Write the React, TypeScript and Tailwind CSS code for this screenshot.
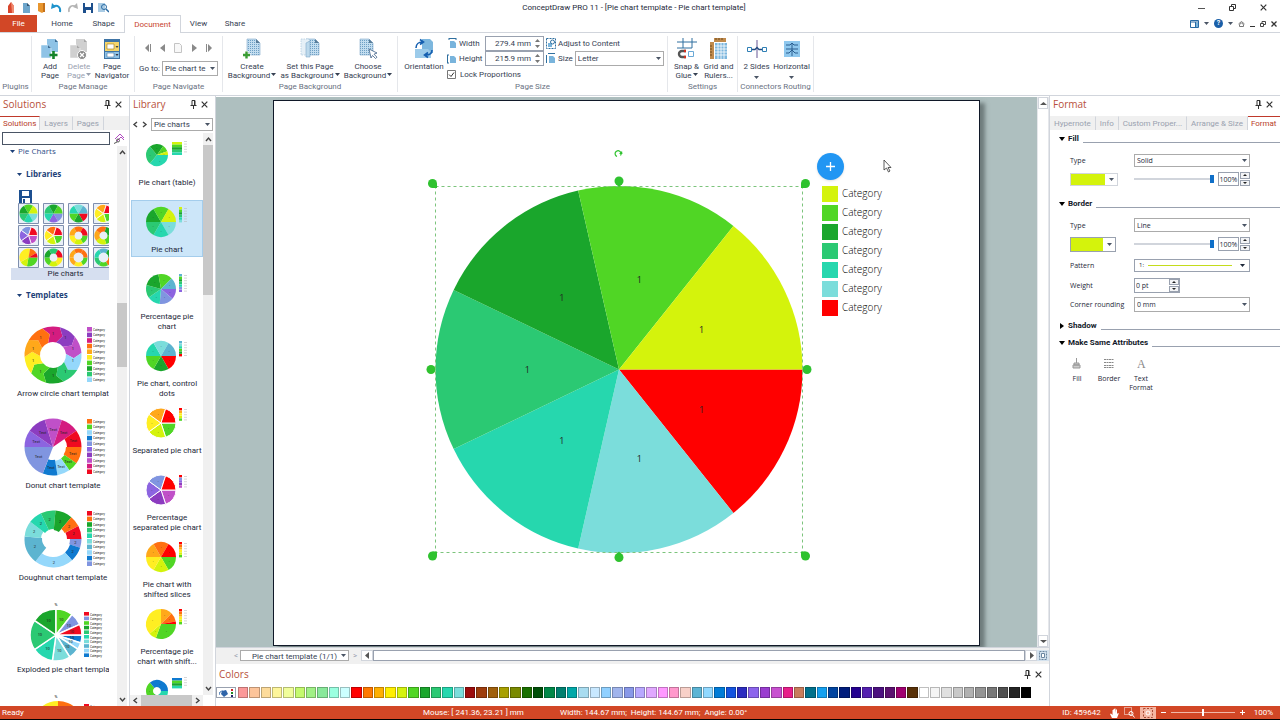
import React from 'react';

type Slice = [color: string, sweep: number, inner?: number];

const RED = '#ff0000';
const AQUA = '#7bdddb';
const TEAL = '#26d7ae';
const GREEN = '#2bc973';
const DARK = '#1aa62c';
const LIME = '#50d625';
const YELLOW = '#d4f30c';
const SUN = '#ffee22';
const AMBER = '#ffa81a';
const ORANGE = '#ff7010';
const BLUE = '#0f7ad0';
const SKY = '#95d8fb';
const STEEL = '#5cb4d0';
const PERI = '#8095e0';
const VIOLET = '#8c64e0';
const PURPLE = '#8c3cc0';
const ORCHID = '#c050c8';
const PINK = '#d41c80';
const CRIMSON = '#f00a20';

const at = (cx: number, cy: number, r: number, deg: number) => {
  const a = (deg * Math.PI) / 180;
  return `${(cx + r * Math.cos(a)).toFixed(2)} ${(cy + r * Math.sin(a)).toFixed(2)}`;
};

const even = (colors: string[], inner = 0): Slice[] =>
  colors.map((c) => [c, 360 / colors.length, inner]);

interface PieProps {
  cx: number;
  cy: number;
  r: number;
  slices: Slice[];
  start?: number;
  stroke?: string;
  gap?: number;
  label?: string;
  labelSize?: number;
}

const Pie = ({ cx, cy, r, slices, start = 0, stroke = 'none', gap = 0, label, labelSize = 4 }: PieProps) => {
  let angle = start;
  return (
    <g>
      {slices.map(([color, sweep, inner = 0], i) => {
        const a = angle;
        const b = angle + sweep;
        angle = b;
        const large = sweep > 180 ? 1 : 0;
        const d = `M${at(cx, cy, inner, a)} L${at(cx, cy, r, a)} A${r} ${r} 0 ${large} 1 ${at(cx, cy, r, b)} L${at(cx, cy, inner, b)} ${inner ? `A${inner} ${inner} 0 ${large} 0 ${at(cx, cy, inner, a)}` : ''} Z`;
        const [x, y] = at(cx, cy, inner ? (r + inner) / 2 : r * (labelSize > 6 ? 0.5 : 0.62), (a + b) / 2).split(' ');
        return (
          <g key={i}>
            <path d={d} fill={color} stroke={stroke} strokeWidth={gap} />
            {label && (
              <text x={x} y={Number(y) + labelSize * 0.36} fontSize={labelSize} textAnchor="middle" fill="#222">
                {label}
              </text>
            )}
          </g>
        );
      })}
    </g>
  );
};

const ArrowRing = ({ colors }: { colors: string[] }) => (
  <g>
    {colors.map((c, i) => {
      const step = 360 / colors.length;
      const a = -112 + i * step;
      const b = a + step;
      const p = (r: number, deg: number) => at(53, 47, r, deg);
      const [x, y] = p(21, a + step / 2 + 4).split(' ');
      return (
        <g key={c}>
          <path
            d={`M${p(13, a)} L${p(21, a + 13)} L${p(28.5, a)} A28.5 28.5 0 0 1 ${p(28.5, b)} L${p(21, b + 13)} L${p(13, b)} A13 13 0 0 0 ${p(13, a)} Z`}
            fill={c}
          />
          <text x={x} y={Number(y) + 1} fontSize="4" textAnchor="middle" fill="#222">1</text>
        </g>
      );
    })}
  </g>
);

const Legend = ({ x, y, pitch, colors }: { x: number; y: number; pitch: number; colors: string[] }) => (
  <g>
    {colors.map((c, i) => (
      <g key={i}>
        <rect x={x} y={y + i * pitch} width="5" height={pitch - 1} fill={c} />
        <text x={x + 6} y={y + i * pitch + 3.5} fontSize="3" fill="#222">Category</text>
      </g>
    ))}
  </g>
);

const Caret = ({ className = 'text-gray-600' }: { className?: string }) => (
  <svg width="5" height="3" viewBox="0 0 5 3" className={`inline-block shrink-0 ${className}`}>
    <path d="M0 0h5L2.5 3z" fill="currentColor" />
  </svg>
);

const Select = ({ label, value, className = '' }: { label: string; value: string; className?: string }) => (
  <div className={`relative ${className}`}>
    <select
      aria-label={label}
      defaultValue={value}
      className="block h-full w-full appearance-none border border-[#ababab] bg-white pl-[2px] pr-2 outline-none"
    >
      <option>{value}</option>
    </select>
    <span className="pointer-events-none absolute inset-y-0 right-[3px] flex items-center">
      <Caret />
    </span>
  </div>
);

const Spinner = () => (
  <span className="flex w-[10px] shrink-0 flex-col gap-px">
    {['M1 3h4L3 1z', 'M1 1h4L3 3z'].map((d, i) => (
      <button key={d} aria-label={i ? 'Decrease' : 'Increase'} className="flex flex-1 items-center justify-center border border-gray-400 bg-gray-100">
        <svg width="6" height="4"><path d={d} fill="#222" /></svg>
      </button>
    ))}
  </span>
);

const Pin = () => (
  <svg width="7" height="9" viewBox="0 0 7 9" fill="none" stroke="#333">
    <path d="M2 .5h3v5H2zM.5 5.5h6M3.5 5.5V9" />
    <path d="M4.5 1v4" />
  </svg>
);

const Close = () => (
  <svg width="7" height="7" viewBox="0 0 7 7" stroke="#333" strokeWidth="1.2">
    <path d="M.7.7l5.6 5.6M6.3.7L.7 6.3" />
  </svg>
);

const PanelTitle = ({ children }: { children: string }) => (
  <div className="flex h-4 shrink-0 items-center justify-between pl-[3px] pr-[7px]">
    <h2 className="font-['Open_Sans',sans-serif] text-[10px] leading-4 text-[#b8503a]">{children}</h2>
    <div className="flex items-center gap-1">
      <button aria-label={`Pin ${children}`}><Pin /></button>
      <button aria-label={`Close ${children}`}><Close /></button>
    </div>
  </div>
);

const PanelTabs = ({ tabs, active }: { tabs: string[]; active: string }) => (
  <div className="mt-1 flex h-[14px] shrink-0 overflow-hidden bg-[#f0f0f0]">
    {tabs.map((t) =>
      t === active ? (
        <button key={t} className="whitespace-nowrap border-r border-t border-r-gray-300 border-t-[#c0392b] bg-white px-[3px] text-[#b8402a]">{t}</button>
      ) : (
        <button key={t} className="whitespace-nowrap border-r border-t border-r-gray-300 border-t-transparent px-1 text-gray-400">{t}</button>
      )
    )}
  </div>
);

const Chevron = ({ dir }: { dir: 'up' | 'down' | 'left' | 'right' }) => {
  const d = { up: 'M1 5l2.5-3L6 5', down: 'M1 2l2.5 3L6 2', left: 'M5 1L2 3.5 5 6', right: 'M2 1l3 2.5L2 6' }[dir];
  return (
    <svg width="7" height="7" viewBox="0 0 7 7" fill="none" stroke="#444" strokeWidth="1.4"><path d={d} /></svg>
  );
};

/* ---------- ribbon ---------- */

const Sheets = ({ fill, fold, children }: { fill: string; fold: string; children?: React.ReactNode }) => (
  <svg width="20" height="22" viewBox="0 0 20 22">
    <path d="M7 1h8l3 3v10H7z" fill={fill} />
    <path d="M15 1l3 3h-3z" fill={fold} />
    <path d="M1 7h7l3 3v10H1z" fill={fill} stroke="#fff" strokeWidth=".5" />
    <path d="M8 7l3 3H8z" fill={fold} />
    {children}
  </svg>
);

const Hatched = ({ x = 5, children }: { x?: number; children?: React.ReactNode }) => (
  <svg width="20" height="22" viewBox="0 0 20 22">
    <defs>
      <pattern id="hatch" width="2" height="2" patternUnits="userSpaceOnUse">
        <rect width="2" height="2" fill="#c3ddef" />
        <rect width="1" height="1" fill="#6d9fc4" />
      </pattern>
    </defs>
    <path d={`M${x} 1h9l4 4v12H${x}z`} fill="url(#hatch)" stroke="#7fa9c9" strokeWidth=".6" />
    <path d={`M${x + 9} 1l4 4h-4z`} fill="#5a7d99" />
    {children}
  </svg>
);

const DeleteIcon = () => (
  <Sheets fill="#d0d0d0" fold="#a8a8a8">
    <circle cx="13" cy="17" r="4.5" fill="#8a8a8a" stroke="#fff" />
    <path d="M11 15l4 4m0-4l-4 4" stroke="#fff" strokeWidth="1.3" />
  </Sheets>
);

const AddIcon = () => (
  <Sheets fill="#8fc3e6" fold="#3f6f96">
    <path d="M13.500 13v8M9.500 17h8" stroke="#15832b" strokeWidth="2.6" />
  </Sheets>
);

const NavigatorIcon = () => (
  <svg width="20" height="22" viewBox="0 0 20 22">
    <path d="M2 1h16v20H2z" fill="#3f74a5" />
    <path d="M3 4h14v9H3z" fill="#f6d56a" />
    <path d="M5 6h7v5H5z" fill="#fff" stroke="#9a7a20" strokeWidth=".6" />
    <path d="M13.500 8h3l-1.500 2z" fill="#444" />
    <path d="M3 14h14v6H3z" fill="#8fc3e6" />
    <path d="M5 15h7v4H5z" fill="#fff" stroke="#3f74a5" strokeWidth=".6" />
    <path d="M13.500 16h3l-1.500 2z" fill="#334" />
  </svg>
);

const CreateIcon = () => (
  <Hatched>
    <path d="M4.500 13v8M.5 17h8" stroke="#fff" strokeWidth="4" />
    <path d="M4.500 13.500v7M1 17h7" stroke="#3a9c34" strokeWidth="2.4" />
  </Hatched>
);

const SetIcon = () => (
  <Hatched x={6}>
    <path d="M1 1h8v16H1z" fill="#e6f0f7" stroke="#9fc0d8" strokeWidth=".6" strokeDasharray="1.500 1" />
    <path d="M6 5l4-2v16H6z" fill="#bcd9ec" stroke="#7fa9c9" strokeWidth=".6" />
  </Hatched>
);

const ChooseIcon = () => (
  <Hatched x={2}>
    <path d="M11 11l8 4-3 1.200 3 3-1.500 1.300-3-3-1.500 2.500z" fill="#fff" stroke="#3f5f86" strokeWidth=".8" />
  </Hatched>
);

const OrientIcon = () => (
  <svg width="20" height="22" viewBox="0 0 20 22">
    <path d="M8 1h8l3 3v11H8z" fill="#7db7de" />
    <path d="M1 11h13l3 3v6H1z" fill="#9ccbea" />
    <path d="M2 10c0-4 3-6 6-6M6 1.500L9.500 4 6 6.500" fill="none" stroke="#155fb0" strokeWidth="1.600" />
    <path d="M18 12c0 4-3 5-6 5M14 14.500L10.500 17l3.500 2.500" fill="none" stroke="#155fb0" strokeWidth="1.600" />
  </svg>
);

const SnapIcon = () => (
  <svg width="20" height="22" viewBox="0 0 20 22" fill="none">
    <path d="M0 4h20M6 0v10M15 0v10M0 10h15" stroke="#2f6f9f" />
    <path d="M9 13H5a3 3 0 000 6h4" stroke="#555" strokeWidth="2.400" />
    <path d="M9 13H7M9 19H7" stroke="#d03020" strokeWidth="2.400" />
    <path d="M11.500 13.500h5v5h-5z" stroke="#6aa9d6" />
  </svg>
);

const GridIcon = () => (
  <svg width="20" height="22" viewBox="0 0 20 22">
    <path d="M5 0h12v4H5zM1 4h4v17H1z" fill="#c08a4c" />
    <path d="M7 0v2m3-2v2m3-2v2M1 8h2m-2 3h2m-2 3h2m-2 3h2" stroke="#6f4a1e" />
    <path d="M6 5h12v16H6z" fill="#7db7de" />
    <path d="M9 5v16m3-16v16m3-16v16M6 8h12M6 11h12M6 14h12M6 17h12" stroke="#fff" strokeWidth=".8" />
  </svg>
);

const SidesIcon = () => (
  <svg width="20" height="22" viewBox="0 0 20 22" fill="none">
    <path d="M10 2v18" stroke="#9a8fb8" strokeWidth="1.500" />
    <path d="M.5 9.500h4v4h-4zM15.500 9.500h4v4h-4z" stroke="#2f7fb5" />
    <path d="M5 11.500h3l2-2 2 2h3" stroke="#234a80" strokeWidth="1.300" />
  </svg>
);

const HorizIcon = () => (
  <svg width="20" height="22" viewBox="0 0 20 22" fill="none">
    <path d="M2 3h16v16H2z" fill="#8fc8ee" />
    <path d="M4 7h4l2-2 2 2h4M4 11h12M4 15h3l3-3 3 3h3M10 5v13" stroke="#2a5f90" />
  </svg>
);

interface ToolProps {
  icon: React.ReactNode;
  lines: string[];
  className: string;
  menu?: boolean;
  disabled?: boolean;
}

const Tool = ({ icon, lines, className, menu, disabled }: ToolProps) => (
  <button
    disabled={disabled}
    className={`flex flex-col items-center gap-[2px] whitespace-nowrap pt-[2px] leading-[9px] disabled:text-gray-400 ${className}`}
  >
    {icon}
    <span>
      {lines.map((l, i) => (
        <span key={l} className="block">
          {l}
          {menu && i === lines.length - 1 && <Caret className="mb-[2px] ml-px" />}
        </span>
      ))}
    </span>
  </button>
);

const Group = ({ name, className, children }: { name: string; className: string; children?: React.ReactNode }) => (
  <section className={`my-[3px] flex shrink-0 flex-col border-r border-gray-200 ${className}`}>
    <div className="flex min-h-0 flex-1 justify-center">{children}</div>
    <h3 className="whitespace-nowrap text-center leading-[10px] text-gray-500">{name}</h3>
  </section>
);

const SizeIcon = ({ d }: { d: string }) => (
  <svg width="10" height="11" viewBox="0 0 10 11" className="shrink-0">
    <path d="M3 3h4l2 2v5H3z" fill="#79b4dc" />
    <path d={d} stroke="#2f6f9f" fill="none" />
  </svg>
);

const Measure = ({ name, value, d }: { name: string; value: string; d: string }) => (
  <label className="flex h-[15px] items-center gap-[2px]">
    <SizeIcon d={d} />
    <span className="w-6">{name}</span>
    <span className="flex h-[15px] w-[59px] items-center border border-gray-400 pr-[3px]">
      <input defaultValue={value} className="w-full min-w-0 flex-1 text-right outline-none" />
      <svg width="5" height="9" viewBox="0 0 5 9" className="ml-1 shrink-0" fill="#777">
        <path d="M0 3h5L2.500 0zM0 6h5L2.500 9z" />
      </svg>
    </span>
  </label>
);

const navIcons = [
  { name: 'First page', d: 'M6 1v8L2 5zM7 1h1v8H7z' },
  { name: 'Previous page', d: 'M7 1v8L2 5z' },
  { name: 'Page', d: '' },
  { name: 'Next page', d: 'M3 1v8l5-4z' },
  { name: 'Last page', d: 'M2 1h1v8H2zM4 1v8l4-4z' },
];

const Ribbon = () => (
  <div className="flex h-[63px] shrink-0 overflow-hidden border-b border-gray-300">
    <Group name="Plugins" className="w-8" />
    <Group name="Page Manage" className="w-[103px]">
      <Tool icon={<AddIcon />} lines={['Add', 'Page']} className="w-7" />
      <Tool icon={<DeleteIcon />} lines={['Delete', 'Page']} className="w-[30px]" menu disabled />
      <Tool icon={<NavigatorIcon />} lines={['Page', 'Navigator']} className="w-9" />
    </Group>
    <Group name="Page Navigate" className="w-[88px]">
      <div className="flex flex-col gap-2 pt-[7px]">
        <div className="flex items-center justify-between px-1">
          {navIcons.map(({ name, d }) => (
            <button key={name} aria-label={name}>
              <svg width="10" height="10" viewBox="0 0 10 10">
                {d ? <path d={d} fill="#8a8a8a" /> : <path d="M1.500.5h5l2 2v7h-7z" fill="#f8f8f8" stroke="#c4c4c4" />}
              </svg>
            </button>
          ))}
        </div>
        <label className="flex h-[15px] items-center gap-[2px] whitespace-nowrap">
          Go to:
          <Select label="Go to" value="Pie chart te" className="h-[15px] w-[56px]" />
        </label>
      </div>
    </Group>
    <Group name="Page Background" className="w-[175px]">
      <Tool icon={<CreateIcon />} lines={['Create', 'Background']} className="w-[54px]" menu />
      <Tool icon={<SetIcon />} lines={['Set this Page', 'as Background']} className="w-[62px]" menu />
      <Tool icon={<ChooseIcon />} lines={['Choose', 'Background']} className="w-[54px]" menu />
    </Group>
    <Group name="Page Size" className="w-[270px]">
      <Tool icon={<OrientIcon />} lines={['Orientation']} className="w-[46px]" />
      <div className="flex w-[99px] flex-col">
        <Measure name="Width" value="279.4 mm" d="M2 .5h7M2 0v2M9 0v2" />
        <Measure name="Height" value="215.9 mm" d="M.5 2v8M0 2h2M0 10h2" />
        <label className="flex h-4 items-center gap-1">
          <input type="checkbox" defaultChecked className="peer sr-only" />
          <svg width="9" height="9" viewBox="0 0 9 9" fill="#fff" stroke="#777">
            <path d="M.5.5h8v8h-8z" />
            <path d="M2 4.500l2 2 3-4" stroke="#333" fill="none" />
          </svg>
          Lock Proportions
        </label>
      </div>
      <div className="flex w-[118px] flex-col">
        <button className="flex h-[15px] items-center gap-[2px]">
          <svg width="10" height="11" viewBox="0 0 10 11" fill="none">
            <path d="M.5 .5h9v10h-9z" stroke="#2f6f9f" strokeDasharray="2 1" />
            <path d="M2 5h4v4H2z" fill="#79b4dc" />
            <circle cx="6.500" cy="4" r="2" stroke="#2f6f9f" />
          </svg>
          Adjust to Content
        </button>
        <label className="flex h-[15px] items-center gap-[2px]">
          <SizeIcon d="M.5 2v8M2 .5h7" />
          Size
          <Select label="Size" value="Letter" className="h-[15px] flex-1" />
        </label>
      </div>
    </Group>
    <Group name="Settings" className="w-[70px]">
      <Tool icon={<SnapIcon />} lines={['Snap &', 'Glue']} className="w-8" menu />
      <Tool icon={<GridIcon />} lines={['Grid and', 'Rulers...']} className="w-8" />
    </Group>
    <Group name="Connectors Routing" className="w-[76px]">
      {[
        { n: '2 Sides', i: <SidesIcon />, w: 'w-[32px]' },
        { n: 'Horizontal', i: <HorizIcon />, w: 'w-[38px]' },
      ].map(({ n, i, w }) => (
        <button key={n} className={`flex flex-col items-center gap-[2px] pt-[2px] leading-[9px] ${w}`}>
          {i}
          {n}
          <Caret className="mt-[3px] text-gray-600" />
        </button>
      ))}
    </Group>
  </div>
);

const TitleBar = () => (
  <header className="grid h-[15px] shrink-0 grid-cols-[1fr_auto_1fr] items-center">
    <div className="flex items-center gap-[5px] pl-[6px]">
      <svg width="10" height="11" viewBox="0 0 10 11"><path d="M2 4l3-4 3 4v7H2z" fill="#d8452c" /><path d="M5 0l3 4v7H6z" fill="#f08a70" /></svg>
      <svg width="10" height="11" viewBox="0 0 10 11"><path d="M2 1h4l3 3v7H2z" fill="#6ea6cc" /><path d="M6 1l3 3H6z" fill="#33536e" /></svg>
      <svg width="10" height="11" viewBox="0 0 10 11"><path d="M2 1h7v8l-3 2-4-2z" fill="#e8962e" /><path d="M7 1h2v9H7z" fill="#c4701a" /></svg>
      <svg width="11" height="10" viewBox="0 0 11 10" fill="none"><path d="M2 4c4-3 8 0 7 5" stroke="#1f93cc" strokeWidth="2" /><path d="M0 6l1-6 4 4z" fill="#1f93cc" /></svg>
      <svg width="11" height="10" viewBox="0 0 11 10" fill="none"><path d="M9 4C5 1 1 4 2 9" stroke="#b4b4b4" strokeWidth="1.600" /><path d="M11 6l-1-6-4 4z" fill="#b4b4b4" /></svg>
      <svg width="10" height="10" viewBox="0 0 10 10"><path d="M0 0h10v10H0z" fill="#1d4f8c" /><path d="M2 0h6v4H2zM3 7h5v3H3z" fill="#fff" /></svg>
      <svg width="11" height="11" viewBox="0 0 11 11" fill="none"><path d="M0 1h7v9H0z" fill="#a9cbe4" /><circle cx="6" cy="5" r="2.500" stroke="#2a6ba4" /><path d="M8 7l3 3" stroke="#2a6ba4" strokeWidth="1.500" /></svg>
    </div>
    <h1 className="whitespace-nowrap pr-3 text-gray-800">ConceptDraw PRO 11 - [Pie chart template - Pie chart template]</h1>
    <div className="flex items-center justify-end gap-6 pr-[13px]">
      <button aria-label="Minimize"><svg width="7" height="7" stroke="#555"><path d="M0 4.500h7" /></svg></button>
      <button aria-label="Restore"><svg width="7" height="7" fill="none" stroke="#333"><path d="M.5 2.500h4v4h-4zM2.500 2V.5h4v4H5" /></svg></button>
      <button aria-label="Close window"><Close /></button>
    </div>
  </header>
);

const MenuBar = () => (
  <nav className="flex h-[18px] shrink-0 items-stretch border-b border-gray-300">
    <button className="w-[37px] bg-[#d24726] text-white">File</button>
    <button className="w-[50px]">Home</button>
    <button className="w-[37px] pr-1">Shape</button>
    <button className="h-[18px] w-[57px] border-x border-t border-gray-300 bg-white text-[#c8452c]">Document</button>
    <button className="w-[35px]">View</button>
    <button className="w-[38px]">Share</button>
    <div className="ml-auto flex items-center gap-[5px] pr-[3px]">
      <svg width="9" height="8" viewBox="0 0 9 8" fill="none" stroke="#2a6ba4"><path d="M.5.5h8v7h-8zM.5 2h8M5.500 2v5.500" /><path d="M6 3h2v4H6z" fill="#79b4dc" stroke="none" /></svg>
      <Caret />
      <button aria-label="Help" className="flex size-[9px] items-center justify-center rounded-full bg-[#1a5fa8] text-[7px] font-bold leading-none text-white">?</button>
      <Caret />
      <svg width="7" height="6" fill="none" stroke="#777"><path d="M.5 3L3.500.5l3 2.500M1.500 5.500v-2l2-1.500 2 1.500v2z" /></svg>
      <svg width="5" height="7" stroke="#333"><path d="M0 6.500h5" /></svg>
      <svg width="6" height="7" fill="none" stroke="#444"><path d="M.5 3.500h3v3h-3zM2 3V1.500h3.500v3H4" /></svg>
      <svg width="6" height="6" stroke="#333" strokeWidth="1.300"><path d="M.5.5l5 5m0-5l-5 5" /></svg>
    </div>
  </nav>
);

/* ---------- solutions panel ---------- */

const tiles: { slices: Slice[]; gap?: boolean }[] = [
  { slices: even([AQUA, TEAL, GREEN, DARK, LIME, YELLOW]) },
  { slices: even([PERI, VIOLET, TEAL, GREEN, DARK, LIME]) },
  { slices: even([CRIMSON, DARK, LIME, TEAL, AQUA, STEEL]) },
  { slices: even([LIME, YELLOW, SUN, AMBER, CRIMSON]), gap: true },
  { slices: even([ORCHID, PURPLE, VIOLET, PERI, CRIMSON]), gap: true },
  { slices: even([LIME, YELLOW, SUN, ORANGE, CRIMSON]), gap: true },
  { slices: even([LIME, YELLOW, SUN, AMBER, ORANGE, CRIMSON], 4) },
  { slices: even([LIME, YELLOW, AMBER, ORANGE, DARK], 4) },
  { slices: [[LIME, 100], [YELLOW, 50], [SUN, 130], [ORANGE, 50], [CRIMSON, 30]] },
  { slices: even([SUN, YELLOW, LIME, DARK, GREEN, CRIMSON], 4) },
  { slices: even([LIME, SUN, AMBER, AMBER, ORANGE, ORANGE], 5) },
  { slices: even([ORANGE, LIME, GREEN, TEAL, STEEL, DARK], 5) },
];

const templates = [
  {
    name: 'Arrow circle chart templat',
    art: <ArrowRing colors={[PINK, PURPLE, ORCHID, SKY, GREEN, DARK, LIME, SUN, AMBER, ORANGE]} />,
    legend: [ORCHID, PURPLE, PINK, ORANGE, AMBER, SUN, LIME, DARK, GREEN, SKY],
  },
  {
    name: 'Donut chart template',
    art: (
      <Pie
        cx={53} cy={47} r={28.5} label="Text" labelSize={4}
        slices={[[ORANGE, 35, 13], [LIME, 20, 14], [SKY, 26, 14], [BLUE, 30, 13], [PERI, 69], [VIOLET, 35], [PURPLE, 38], [ORCHID, 35], [PINK, 37], [CRIMSON, 35, 14]]}
      />
    ),
    legend: [ORANGE, LIME, SKY, BLUE, PERI, VIOLET, PURPLE, ORCHID, PINK, CRIMSON],
  },
  {
    name: 'Doughnut chart template',
    art: (
      <Pie
        cx={53} cy={47} r={28.5} label="2" labelSize={4}
        slices={[[PERI, 18, 17], [BLUE, 30, 18], [SKY, 80, 18], [STEEL, 57, 11], [AQUA, 32, 12], [TEAL, 28, 10], [GREEN, 30, 10], [DARK, 35, 9], [ORANGE, 23, 13], [CRIMSON, 27, 14]]}
      />
    ),
    legend: [CRIMSON, ORANGE, DARK, GREEN, TEAL, AQUA, STEEL, SKY, BLUE, PERI],
  },
  {
    name: 'Exploded pie chart templat',
    small: true,
    art: (
      <Pie
        cx={56} cy={51} r={26} label="10" labelSize={4} stroke="#fff" gap={1.5}
        slices={[[BLUE, 18], [SKY, 15], [STEEL, 25], [AQUA, 40], [TEAL, 48], [GREEN, 68], [DARK, 56], [LIME, 38], [PERI, 28], [CRIMSON, 24]]}
      />
    ),
    legend: [CRIMSON, PERI, LIME, DARK, GREEN, TEAL, AQUA, STEEL, SKY, BLUE],
  },
  {
    name: '',
    small: true,
    art: <Pie cx={58} cy={51} r={26} slices={[[BLUE, 100], [LIME, 130], [SUN, 40], [ORANGE, 90]]} />,
    legend: [CRIMSON, PERI],
  },
];

const Heading = ({ children }: { children: string }) => (
  <h3 className="flex items-center gap-[4px] pl-[17px] font-['Open_Sans',sans-serif] font-bold leading-[10px] text-[#1c3f78]">
    <Caret className="text-[#1c3f78]" />
    {children}
  </h3>
);

const Solutions = () => (
  <aside className="flex w-[130px] shrink-0 flex-col border-r border-gray-300">
    <PanelTitle>Solutions</PanelTitle>
    <PanelTabs tabs={['Solutions', 'Layers', 'Pages']} active="Solutions" />
    <div className="mt-px flex h-[15px] shrink-0 items-center gap-1 pl-[2px]">
      <input aria-label="Search solutions" className="h-[13px] w-[108px] border border-gray-600" />
      <svg width="11" height="11" viewBox="0 0 11 11" fill="none" stroke="#b04cc0">
        <path d="M1 6l5-5 4 4M3 8l4-4 3 3" />
        <circle cx="4" cy="7.500" r="1.500" stroke="#555" />
        <path d="M0 10.500L3 9" stroke="#555" />
      </svg>
    </div>
    <div className="flex min-h-0 flex-1">
      <div className="flex w-[109px] flex-col overflow-hidden">
        <h3 className="flex items-center gap-[3px] pl-[10px] font-['Open_Sans',sans-serif] leading-[10px] text-[#2f4f88]">
          <Caret className="text-[#1c3f78]" />
          Pie Charts
        </h3>
        <div className="mt-[13px]"><Heading>Libraries</Heading></div>
        <svg width="13" height="13" viewBox="0 0 13 13" className="ml-[19px] mt-[11px] shrink-0">
          <path d="M0 0h13v13H0z" fill="#1c4f90" />
          <path d="M3 1h7v5H3zM3 8h8v5H3z" fill="#fff" />
          <path d="M4 9h2v4H4z" fill="#1c4f90" />
        </svg>
        <div className="grid shrink-0 grid-cols-[repeat(4,21px)] gap-x-1 gap-y-px pl-[18px]">
          {tiles.map(({ slices, gap }, i) => (
            <svg key={i} width="21" height="21" viewBox="0 0 21 21">
              <path d="M.5.500h20v20H.5z" fill="#e9eff8" stroke="#7f8fae" />
              <Pie cx={10.5} cy={10.5} r={9} slices={slices} stroke={gap ? '#fff' : 'none'} gap={gap ? 0.8 : 0} />
            </svg>
          ))}
        </div>
        <div className="ml-[11px] h-3 shrink-0 bg-[#d6dff0] pl-[11px] text-center leading-3 text-gray-800">Pie charts</div>
        <div className="mt-[10px]"><Heading>Templates</Heading></div>
        <ul className="mt-2">
          {templates.map(({ name, art, legend, small }) => (
            <li key={name} className="h-[92px]">
              <svg width="109" height="80" viewBox="0 0 109 80" className="block">
                {small && <text x="56" y="22" fontSize="4" textAnchor="middle" fill="#222">%</text>}
                {art}
                {small ? <Legend x={84} y={28} pitch={4.6} colors={legend} /> : <Legend x={87} y={19} pitch={5.6} colors={legend} />}
              </svg>
              <div className="whitespace-nowrap pl-[17px] text-center leading-3 text-gray-800">{name}</div>
            </li>
          ))}
        </ul>
      </div>
      <div className="ml-2 flex w-[10px] flex-col items-center bg-[#f0f0f0] py-[3px]">
        <Chevron dir="up" />
        <div className="mt-[147px] h-16 w-full bg-[#c8c8c8]" />
        <div className="mt-auto"><Chevron dir="down" /></div>
      </div>
    </div>
  </aside>
);

/* ---------- library panel ---------- */

interface Shape {
  name: string;
  slices: Slice[];
  gap?: boolean;
  table?: boolean;
}

const shapes: Shape[] = [
  { name: 'Pie chart (table)', table: true, slices: [[TEAL, 130], [GREEN, 100], [DARK, 75], [LIME, 35], [YELLOW, 20]] },
  { name: 'Pie chart', slices: even([AQUA, TEAL, GREEN, DARK, LIME, YELLOW]) },
  { name: 'Percentage pie chart', slices: [[VIOLET, 40], [PERI, 55], [TEAL, 50], [GREEN, 50], [DARK, 65], [LIME, 55], [STEEL, 45]] },
  { name: 'Pie chart, control dots', slices: even([RED, DARK, LIME, TEAL, AQUA, STEEL]) },
  { name: 'Separated pie chart', gap: true, slices: even([LIME, YELLOW, SUN, AMBER, RED]) },
  { name: 'Percentage separated pie chart', gap: true, slices: even([ORCHID, PURPLE, VIOLET, PERI, RED]) },
  { name: 'Pie chart with shifted slices', slices: even([LIME, YELLOW, SUN, AMBER, ORANGE, RED]) },
  { name: 'Percentage pie chart with shift...', slices: [[LIME, 110], [YELLOW, 30], [SUN, 130], [AMBER, 45], [ORANGE, 35], [RED, 10]] },
  { name: '', table: true, slices: [[TEAL, 70, 4], [DARK, 60, 4], [LIME, 100, 4], [BLUE, 130, 4]] },
];

const Library = () => (
  <aside className="flex w-[86px] shrink-0 flex-col border-r border-gray-300">
    <PanelTitle>Library</PanelTitle>
    <div className="mt-[5px] flex h-[14px] shrink-0 items-center gap-[2px] px-[2px]">
      <button aria-label="Previous library"><Chevron dir="left" /></button>
      <button aria-label="Next library"><Chevron dir="right" /></button>
      <Select label="Library" value="Pie charts" className="ml-px h-[13px] flex-1" />
    </div>
    <div className="flex min-h-0 flex-1 pt-[2px]">
      <ul className="ml-px min-w-0 flex-1 overflow-hidden text-center leading-[10px] text-gray-800">
        {shapes.map(({ name, slices, gap, table }) => {
          const colors = slices.map(([c]) => c).reverse();
          const selected = name === 'Pie chart';
          return (
            <li key={name} className="h-[67px]">
              <button
                aria-label={name || 'Donut chart'}
                className={`flex w-full flex-col items-center ${selected ? 'h-[57px] bg-[#cce6f9] outline -outline-offset-1 outline-[#a4cdec]' : 'h-[66px]'}`}
              >
                <svg width="70" height="45" viewBox="0 0 70 45" className="block shrink-0">
                  <Pie
                    cx={table ? 25 : 29} cy={22} r={table ? 11 : 15} slices={slices}
                    label="1" labelSize={2} stroke={gap ? '#fff' : 'none'} gap={gap ? 1 : 0}
                  />
                  {colors.map((c, i) =>
                    table ? (
                      <rect key={i} x="40" y={9 + i * 2.6} width="10" height="2.600" fill={c} />
                    ) : (
                      <rect key={i} x="47" y={7 + i * 2.6} width="3" height="2.400" fill={c} />
                    )
                  )}
                  {colors.map((_, i) => (
                    <path key={i} d={`M52 ${8.5 + i * 2.6}h3`} stroke="#bbb" strokeWidth=".6" />
                  ))}
                </svg>
                {name}
              </button>
            </li>
          );
        })}
      </ul>
      <div className="mr-[2px] flex w-[10px] flex-col items-center bg-[#f0f0f0] py-[3px]">
        <Chevron dir="up" />
        <div className="mt-[2px] h-[150px] w-full bg-[#c8c8c8]" />
        <div className="mt-auto"><Chevron dir="down" /></div>
      </div>
    </div>
    <div className="mr-3 flex h-[11px] shrink-0 items-center bg-[#f0f0f0] px-[2px]">
      <Chevron dir="left" />
      <div className="mx-[2px] h-full flex-1 bg-[#c8c8c8]" />
      <Chevron dir="right" />
    </div>
  </aside>
);

/* ---------- drawing area ---------- */

const chartColors = [YELLOW, LIME, DARK, GREEN, TEAL, AQUA, RED];

// [x, y, corner that points at the selection frame]
const handles: [number, number, string][] = [
  [158.5, 82.5, 'M0 0h4.500v4.500H0z'],
  [345, 80, 'M-3 3h6L0 6z'],
  [531.5, 82.5, 'M0 0v4.500h-4.500V0z'],
  [157, 268.5, ''],
  [533, 268.5, ''],
  [158.5, 455, 'M0 0v-4.500h4.500V0z'],
  [345, 456.5, 'M-3-3h6L0-6z'],
  [531.5, 455, 'M0 0v-4.500h-4.500V0z'],
];

const Page = () => (
  <div className="relative mx-[57px] mb-px mt-[3px] flex-1 border border-gray-900 bg-white shadow-[5px_3px_4px_#6f7c7c]">
    <svg width="100%" height="100%" className="absolute inset-0 font-['Open_Sans',sans-serif]">
      <Pie cx={345} cy={268.5} r={183.5} slices={even([...chartColors].reverse())} label="1" labelSize={9} />
      <path d="M161.500 85.500h367v366h-367z" fill="none" stroke="#7cc47c" strokeDasharray="3 3" />
      {handles.map(([x, y, d]) => (
        <g key={`${x}-${y}`} transform={`translate(${x} ${y})`} fill="#2fc22f">
          <circle r="4.500" />
          <path d={d} />
        </g>
      ))}
      <path d="M343 55.500a3 3 0 113.500-1" fill="none" stroke="#2fc22f" strokeWidth="1.200" />
      <path d="M345 53l3.500 0-.5-3z" fill="#2fc22f" />
      <path d="M610 59v10l2.500-2 2 4 1.500-1-2-3.500h3z" fill="#fff" stroke="#333" strokeWidth=".8" />
    </svg>
    <button aria-label="Add slice" className="absolute left-[543px] top-[52px] flex size-[27px] items-center justify-center rounded-full bg-[#2196f3] shadow">
      <svg width="11" height="11" stroke="#fff" strokeWidth="1.300"><path d="M5.500 1v9M1 5.500h9" /></svg>
    </button>
    <ul className="absolute left-[548px] top-[83px] flex flex-col font-['Open_Sans',sans-serif] text-[10px] font-light text-black">
      {chartColors.map((c) => (
        <li key={c} className="flex h-[19px] items-center gap-1">
          <span className="size-4" style={{ backgroundColor: c }} />
          Category
        </li>
      ))}
    </ul>
  </div>
);

const ArrowButton = ({ d, name, className }: { d: string; name: string; className: string }) => (
  <button aria-label={name} className={`flex items-center justify-center border border-gray-300 bg-white ${className}`}>
    <svg width="7" height="7"><path d={d} fill="#555" /></svg>
  </button>
);

const palette = (
  'fb9898 fdc49a fddb9a fdf59a f0fd9a c4f96e a0f086 88e89a 9affe0 ccffff ff0000 ff7800 ffaf00 ffee00 d4f30c 50d625 1aa62c 2bc973 26d7ae 7bdddb ' +
  '9c0c0c 9e3d0c a0600c a8a000 7a8a00 1a7000 005008 008848 008070 00a8a8 a8dcf0 c8e8ff 90d0ff a0b4ec 8898e8 b8a8ff e0a8ff ff98ff ff98cc f8d0c8 ' +
  '5cb4d4 90d8ff 007cd8 1454e0 2c2cc0 8c64ec 9a3cd0 c850d0 e81e8a c87c5c 00708c 14a0f0 0044a0 001c7c 240090 5420b0 4c1080 5c1070 a00070 583008 ' +
  'ffffff f4f4f4 e0e0e0 c8c8c8 b0b0b0 949494 787878 505050 242424 000000'
).split(' ');

const Workspace = () => (
  <main className="flex min-w-0 flex-1 flex-col">
    <div className="flex min-h-0 flex-1 pt-px">
      <div className="flex min-w-0 flex-1 flex-col overflow-hidden bg-[#aebfbf]"><Page /></div>
      <div className="flex w-3 flex-col border-x border-gray-200 bg-white">
        <ArrowButton name="Scroll up" d="M0 5h7L3.500 2z" className="h-3" />
        <ArrowButton name="Scroll down" d="M0 2h7L3.500 5z" className="mt-auto h-3" />
      </div>
    </div>
    <div className="flex h-[17px] shrink-0 items-center border-t border-gray-300 bg-[#f0f0f0] pb-px pl-4 text-gray-700">
      <button aria-label="Previous tab" className="w-2 text-gray-400">&lt;</button>
      <Select label="Page" value="Pie chart template (1/1)" className="h-[11px] w-[109px] [&>select]:pl-[11px]" />
      <button aria-label="Next tab" className="w-3 text-gray-400">&gt;</button>
      <ArrowButton name="Scroll left" d="M5 0v7L1 3.500z" className="h-[11px] w-3" />
      <div className="h-[11px] flex-1 border border-gray-400 bg-white" />
      <ArrowButton name="Scroll right" d="M2 0v7l4-3.500z" className="h-[11px] w-3" />
      <svg width="12" height="11" viewBox="0 0 12 11" className="shrink-0 bg-[#d4e2ee]" fill="none" stroke="#6a86a0">
        <path d="M2.500 1.500h7v8h-7z" strokeDasharray="2 1" />
        <path d="M4.500 3.500h3v4h-3z" fill="#fff" />
      </svg>
    </div>
    <section className="h-[42px] shrink-0 pt-[2px]">
      <PanelTitle>Colors</PanelTitle>
      <div className="mt-[5px] flex h-[11px] pr-[17px]">
        <button aria-label="Fill tool" className="mr-[2px] flex w-5 items-center justify-center gap-[3px] border border-gray-400">
          <svg width="9" height="8" viewBox="0 0 9 8"><path d="M3 2l4-1 2 4-4 3-3-3z" fill="#2f64a8" /><path d="M0 6c0-3 2-4 4-4" fill="none" stroke="#2f64a8" /></svg>
          <svg width="2" height="8"><path d="M0 0h2v2H0z" fill="#c22" /><path d="M0 3h2v2H0z" fill="#282" /><path d="M0 6h2v2H0z" fill="#226" /></svg>
        </button>
        {palette.map((c) => (
          <button
            key={c}
            aria-label={`#${c}`}
            className="mr-px flex-1 border border-black/25"
            style={{ backgroundColor: `#${c}` }}
          />
        ))}
      </div>
    </section>
  </main>
);

/* ---------- format panel ---------- */

const Section = ({ name, closed }: { name: string; closed?: boolean }) => (
  <h3 className="flex h-[11px] items-center gap-[3px] pl-[9px] font-bold leading-[11px] text-gray-900">
    <svg width="6" height="6">{closed ? <path d="M1 0v6l4-3z" /> : <path d="M0 1h6L3 5z" />}</svg>
    {name}
    <span className="ml-px mt-2 flex-1 border-b border-gray-400" />
  </h3>
);

const Row = ({ label, className, children }: { label: React.ReactNode; className: string; children: React.ReactNode }) => (
  <div className={`flex items-center pl-[20px] pr-[30px] ${className}`}>
    <div className="w-16 shrink-0">{label}</div>
    <div className="flex min-w-0 flex-1 items-center">{children}</div>
  </div>
);

const ColorButton = ({ name, className }: { name: string; className: string }) => (
  <button aria-label={name} className={`flex items-stretch border ${className}`}>
    <span className="flex-1 bg-[#d4f30c]" />
    <span className="flex w-3 items-center justify-center"><Caret /></span>
  </button>
);

const Opacity = ({ name }: { name: string }) => (
  <>
    <input
      type="range"
      aria-label={`${name} opacity`}
      defaultValue={100}
      className="h-2 min-w-0 flex-1 appearance-none bg-transparent [&::-webkit-slider-runnable-track]:h-[2px] [&::-webkit-slider-runnable-track]:bg-gray-300 [&::-webkit-slider-thumb]:-mt-[3px] [&::-webkit-slider-thumb]:h-2 [&::-webkit-slider-thumb]:w-1 [&::-webkit-slider-thumb]:appearance-none [&::-webkit-slider-thumb]:bg-[#0f6fc8]"
    />
    <span className="ml-1 flex h-[14px] gap-px">
      <input aria-label={`${name} opacity value`} defaultValue="100%" className="w-[21px] border border-gray-400 text-center outline-none" />
      <Spinner />
    </span>
  </>
);

const sameButtons = [
  { lines: 'Fill', icon: <path d="M5.500 1v5M3 6h5v2H3zM2 8h7v3H2z" stroke="#999" fill="#ccc" /> },
  { lines: 'Border', icon: <path d="M1 2.500h10M1 5.500h10M1 8.500h10M1 10.500h10" stroke="#888" strokeDasharray="2 .5" /> },
  { lines: 'Text Format', icon: <text x="2" y="11" fontSize="12" fill="#888" fontFamily="Liberation Serif">A</text> },
];

const Format = () => (
  <aside className="flex w-[231px] shrink-0 flex-col border-l border-gray-300">
    <PanelTitle>Format</PanelTitle>
    <PanelTabs tabs={['Hypernote', 'Info', 'Custom Proper...', 'Arrange & Size', 'Format']} active="Format" />
    <div className="flex flex-col pt-[3px] font-['Open_Sans',sans-serif] text-[7px] text-gray-800">
      <div className="font-[Roboto,sans-serif] text-[8px]"><Section name="Fill" /></div>
      <Row label="Type" className="mt-[9px] h-[14px]">
        <Select label="Fill type" value="Solid" className="h-[13px] flex-1" />
      </Row>
      <Row label={<ColorButton name="Fill color" className="h-[13px] w-12 border-gray-300" />} className="mt-[4px] h-4">
        <Opacity name="Fill" />
      </Row>
      <div className="mt-[11px] font-[Roboto,sans-serif] text-[8px]"><Section name="Border" /></div>
      <Row label="Type" className="mt-[9px] h-[14px]">
        <Select label="Border type" value="Line" className="h-[14px] flex-1" />
      </Row>
      <Row label={<ColorButton name="Border color" className="h-[15px] w-[46px] border-gray-400" />} className="mt-[4px] h-4">
        <Opacity name="Border" />
      </Row>
      <Row label="Pattern" className="mt-[6px] h-[14px]">
        <button aria-label="Pattern" className="flex h-[13px] flex-1 items-center gap-1 border border-gray-400 px-1">
          <span className="text-[6px]">1:</span>
          <span className="h-px flex-1 bg-[#c4dc1c]" />
          <span className="ml-1"><Caret className="text-gray-800" /></span>
        </button>
      </Row>
      <Row label={<label htmlFor="weight">Weight</label>} className="mt-[5px] h-4">
        <span className="flex h-[15px] w-[46px] border border-gray-400">
          <input id="weight" defaultValue="0 pt" className="w-full min-w-0 flex-1 pl-px outline-none" />
          <Spinner />
        </span>
      </Row>
      <Row label={<span className="whitespace-nowrap">Corner rounding</span>} className="mt-[3px] h-4">
        <Select label="Corner rounding" value="0 mm" className="h-[15px] flex-1" />
      </Row>
      <div className="mt-[8px] flex flex-col gap-[6px] font-[Roboto,sans-serif] text-[8px]">
        <Section name="Shadow" closed />
        <Section name="Make Same Attributes" />
      </div>
      <div className="mt-[9px] flex pl-[11px]">
        {sameButtons.map(({ lines, icon }) => (
          <button key={lines} className="flex w-8 flex-col items-center gap-1 self-start leading-[9px]">
            <svg width="12" height="13" viewBox="0 0 12 13" fill="none">{icon}</svg>
            {lines}
          </button>
        ))}
      </div>
    </div>
  </aside>
);

const StatusBar = () => (
  <footer className="flex h-[14px] shrink-0 items-center border-b border-black bg-[#d24726] px-[2px] text-white">
    <span className="w-[33%]">Ready</span>
    <span className="w-[137px] whitespace-nowrap">Mouse: [ 241.36, 23.21 ] mm</span>
    <span className="whitespace-pre">Width: 144.67 mm;  Height: 144.67 mm;  Angle: 0.00°</span>
    <div className="ml-auto flex items-center gap-[5px] pr-[5px]">
      <span className="mr-1">ID: 459642</span>
      <svg width="9" height="10" viewBox="0 0 9 10" fill="#fff"><path d="M2 10L0 6l1-.5L2.500 7V2h1v3V1h1v4-4.500h1V5l.5-3.500h1V6l1-1 .8.5L7 10z" /></svg>
      <svg width="11" height="11" viewBox="0 0 11 11" fill="none" stroke="#fff"><path d="M.5.5h7v7h-7z" strokeDasharray="1 1" /><circle cx="7" cy="6.500" r="2" /><path d="M8.500 8l2 2.500" /></svg>
      <button aria-label="Fit page" className="flex h-3 w-4 items-center justify-center bg-[#f4b5a2]">
        <svg width="10" height="10" viewBox="0 0 10 10" fill="none" stroke="#fff"><path d="M.5.5h9v9h-9z" strokeDasharray="2 1.500" stroke="#a84a34" /><circle cx="5" cy="5" r="2" /></svg>
      </button>
      <button aria-label="Zoom out"><svg width="5" height="5" stroke="#fff"><path d="M0 2.500h5" /></svg></button>
      <input
        type="range"
        aria-label="Zoom"
        className="h-2 w-[64px] appearance-none bg-transparent [&::-webkit-slider-runnable-track]:h-px [&::-webkit-slider-runnable-track]:bg-[#f0b8a8] [&::-webkit-slider-thumb]:-mt-[3px] [&::-webkit-slider-thumb]:h-[7px] [&::-webkit-slider-thumb]:w-[2px] [&::-webkit-slider-thumb]:appearance-none [&::-webkit-slider-thumb]:bg-white"
      />
      <button aria-label="Zoom in"><svg width="5" height="5" stroke="#fff"><path d="M0 2.500h5M2.500 0v5" /></svg></button>
      <span className="ml-1">100%</span>
    </div>
  </footer>
);

const App = () => {
  return (
    <div className="flex h-screen flex-col overflow-hidden bg-white font-[Roboto,sans-serif] text-[8px] leading-[11px] text-gray-700">
      <TitleBar />
      <MenuBar />
      <Ribbon />
      <div className="flex min-h-0 flex-1">
        <Solutions />
        <Library />
        <Workspace />
        <Format />
      </div>
      <StatusBar />
    </div>
  );
};

export default App;
